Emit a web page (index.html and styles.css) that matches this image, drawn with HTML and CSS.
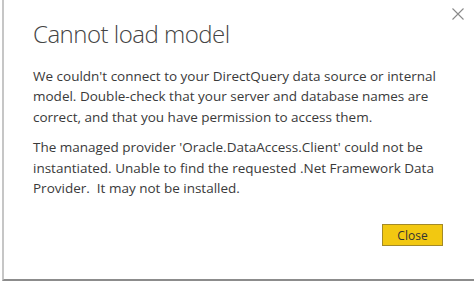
FILE: index.html
```html
<!DOCTYPE html>
<html lang="en">
<head>
    <meta charset="UTF-8">
    <title>Cannot load model</title>
    <link rel="stylesheet" href="styles.css">
</head>
<body>
    <div class="dialog">
        <button class="close-x" aria-label="Close">
            <svg width="12" height="12" viewBox="0 0 12 12">
                <path d="M0.5 0.5 L11.5 11.5 M11.5 0.5 L0.5 11.5" stroke="#8a8a8a" stroke-width="1.1" fill="none"/>
            </svg>
        </button>
        <h1>Cannot load model</h1>
        <p>We couldn't connect to your DirectQuery data source or internal model. Double-check that your server and database names are correct, and that you have permission to access them.</p>
        <p>The managed provider 'Oracle.DataAccess.Client' could not be instantiated. Unable to find the requested .Net Framework Data Provider.&nbsp; It may not be installed.</p>
        <div class="actions">
            <button class="btn-close">Close</button>
        </div>
    </div>
</body>
</html>
```

FILE: styles.css
```css
body {
    margin: 0;
    background-color: #fff;
    font-family: "Open Sans", "Noto Sans", sans-serif;
    color: #333;
}
.dialog {
    position: relative;
    box-sizing: border-box;
    height: 281px;
    margin-left: 2px;
    border-left: 2px solid #c6c6c6;
    border-bottom: 2px solid #8c8c8c;
    padding: 19px 31px 0 29px;
    display: flex;
    flex-direction: column;
}
.close-x {
    position: absolute;
    top: 8px;
    right: 10px;
    padding: 0;
    border: none;
    background: none;
    line-height: 0;
}
h1 {
    margin: 0 0 17px 0;
    font-size: 24px;
    line-height: 30px;
    letter-spacing: -0.5px;
    font-weight: 300;
    color: #444;
}
p {
    margin: 0 0 10.5px 0;
    font-size: 13.5px;
    line-height: 20.3px;
    color: #3a3a3a;
}
.actions {
    margin-top: auto;
    margin-bottom: 33px;
    display: flex;
    justify-content: flex-end;
}
.btn-close {
    width: 61px;
    height: 22px;
    padding: 0;
    font-family: "Open Sans", "Noto Sans", sans-serif;
    font-size: 12px;
    color: #333;
    background-color: #f2c811;
    border: 1px solid #a38a27;
}
```
